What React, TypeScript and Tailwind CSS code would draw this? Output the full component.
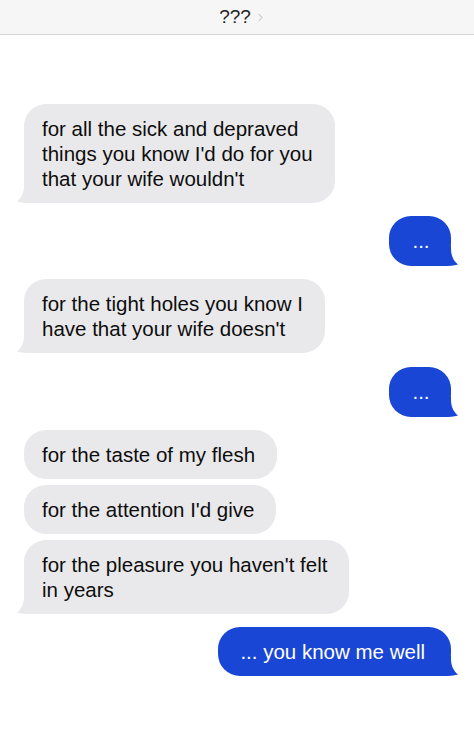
import { ChevronRight } from "lucide-react";

type Msg = {
  lines: string[];
  from: "them" | "me";
  tail?: boolean;
  gap: string;
};

const messages: Msg[] = [
  {
    lines: ["for all the sick and depraved", "things you know I'd do for you", "that your wife wouldn't"],
    from: "them",
    tail: true,
    gap: "mt-0",
  },
  { lines: ["..."], from: "me", tail: true, gap: "mt-[13px]" },
  {
    lines: ["for the tight holes you know I", "have that your wife doesn't"],
    from: "them",
    tail: true,
    gap: "mt-[13px]",
  },
  { lines: ["..."], from: "me", tail: true, gap: "mt-[14px]" },
  { lines: ["for the taste of my flesh"], from: "them", gap: "mt-[13px]" },
  { lines: ["for the attention I'd give"], from: "them", gap: "mt-[6px]" },
  {
    lines: ["for the pleasure you haven't felt", "in years"],
    from: "them",
    tail: true,
    gap: "mt-[6px]",
  },
  { lines: ["... you know me well"], from: "me", tail: true, gap: "mt-[13px]" },
];

function Tail({ color, side }: { color: string; side: "left" | "right" }) {
  return (
    <svg
      width="30"
      height="20"
      viewBox="0 0 30 20"
      className={`absolute bottom-0 ${
        side === "left" ? "-left-[7px]" : "-right-[7px] -scale-x-100"
      }`}
    >
      <path
        d="M7 0 L30 0 L30 20 L14 20 C9 20 4 19.5 0 18.5 C4 15.5 7 10 7 3 Z"
        fill={color}
      />
    </svg>
  );
}

function Bubble({ msg }: { msg: Msg }) {
  const mine = msg.from === "me";
  const dots = msg.lines[0] === "...";
  return (
    <div className={`flex ${mine ? "justify-end pr-[23px]" : "justify-start pl-[24px]"} ${msg.gap}`}>
      <div
        className={`relative rounded-[22px] py-3 text-[20.5px] leading-[25px] ${
          mine ? "bg-[#1a46d6] text-white" : "bg-[#e9e9eb] text-[#0d0d0d]"
        } ${dots ? "w-[62px] pl-[2px] pb-[13px]" : mine ? "pl-[22px] pr-[26px]" : "pl-[18px] pr-[22px]"}`}
      >
        {msg.tail && (
          <Tail color={mine ? "#1a46d6" : "#e9e9eb"} side={mine ? "right" : "left"} />
        )}
        <div className={`relative ${dots ? "text-center" : ""}`}>
          {msg.lines.map((l, i) => (
            <div key={i} className="whitespace-nowrap">
              {l}
            </div>
          ))}
        </div>
      </div>
    </div>
  );
}

export default function App() {
  return (
    <div
      className="min-h-[731px] w-[474px] bg-white"
      style={{ fontFamily: '"Liberation Sans", Arial, sans-serif' }}
    >
      <header className="flex h-[35px] items-center justify-center gap-[3px] border-b border-[#d6d6d6] bg-[#f6f6f6] pl-[12px]">
        <span className="text-[19px] text-[#222]">???</span>
        <ChevronRight className="mt-[1px] h-[13px] w-[13px] text-[#a9a9a9]" strokeWidth={1.5} />
      </header>
      <div className="pt-[69px]">
        {messages.map((m, i) => (
          <Bubble key={i} msg={m} />
        ))}
      </div>
    </div>
  );
}
